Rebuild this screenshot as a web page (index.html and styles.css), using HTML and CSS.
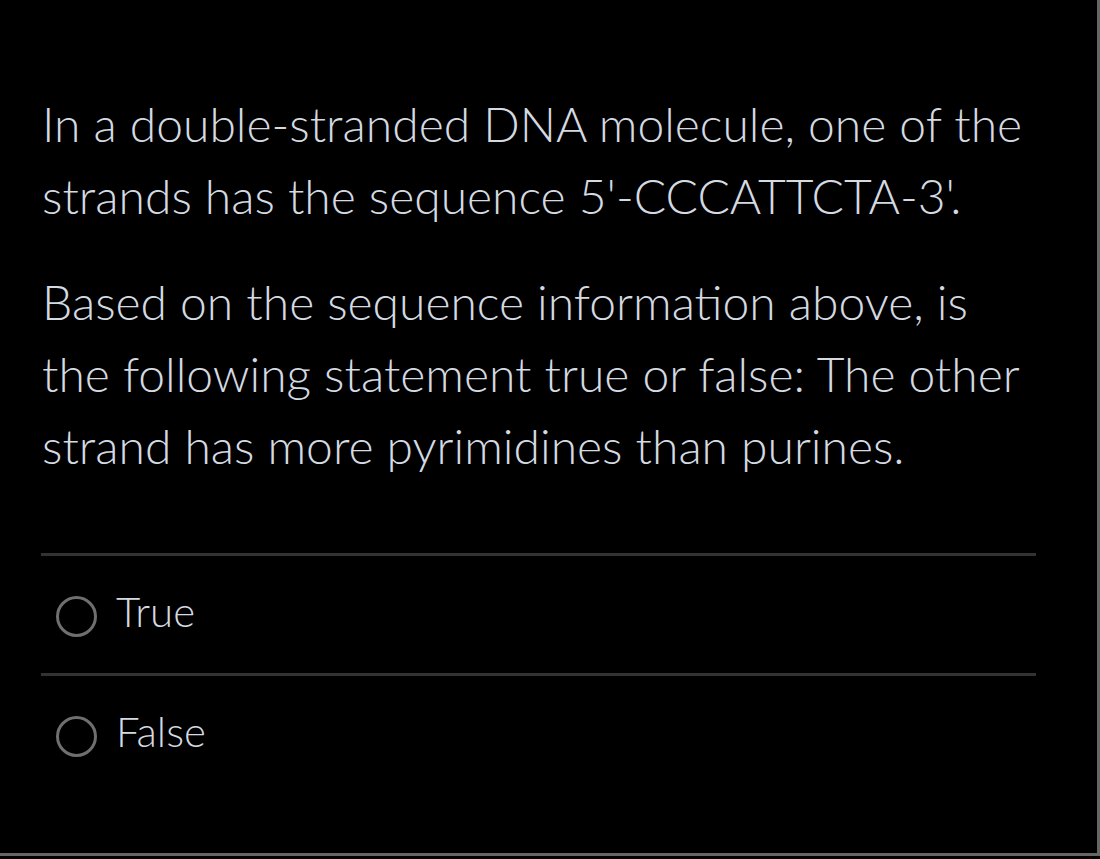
FILE: index.html
```html
<!DOCTYPE html>
<html>
<head>
<meta charset="utf-8">
<link rel="stylesheet" href="styles.css">
</head>
<body>
<div class="card">
  <div class="question">
    <p class="para">In a double-stranded DNA molecule, one of the strands has the sequence 5'-CCCATTCTA-3'.</p>
    <p class="para">Based on the sequence information above, is the following statement true or false: The other strand has more pyrimidines than purines.</p>
  </div>
  <ul class="options">
    <li class="option"><span class="radio"></span><span class="label">True</span></li>
    <li class="option"><span class="radio"></span><span class="label">False</span></li>
  </ul>
</div>
</body>
</html>
```
FILE: styles.css
```css
html, body {
  margin: 0;
  padding: 0;
  background: #000;
}
body {
  width: 1100px;
  height: 859px;
  overflow: hidden;
}
.card {
  box-sizing: border-box;
  width: 1100px;
  height: 856px;
  border-right: 3px solid #666;
  border-bottom: 3px solid #666;
  padding: 88px 61px 0 41px;
  font-family: "Lato Light", "Lato", "Liberation Sans", sans-serif;
  font-weight: 300;
  color: #d4dae1;
}
.question {
  padding-left: 1px;
}
.para {
  margin: 0 0 34px 0;
  font-size: 48px;
  line-height: 72px;
}
.para:last-child {
  margin-bottom: 0;
}
.options {
  list-style: none;
  margin: 71px 0 0 0;
  padding: 0;
}
.option {
  display: flex;
  align-items: center;
  height: 117px;
  border-top: 3px solid #333;
  padding-left: 15px;
}
.radio {
  box-sizing: border-box;
  width: 41px;
  height: 41px;
  border: 3.5px solid #6f6f6f;
  border-radius: 50%;
  margin-top: 3px;
  flex: none;
}
.label {
  margin-left: 19px;
  font-size: 42px;
  line-height: 48px;
  margin-bottom: 8px;
}
```
